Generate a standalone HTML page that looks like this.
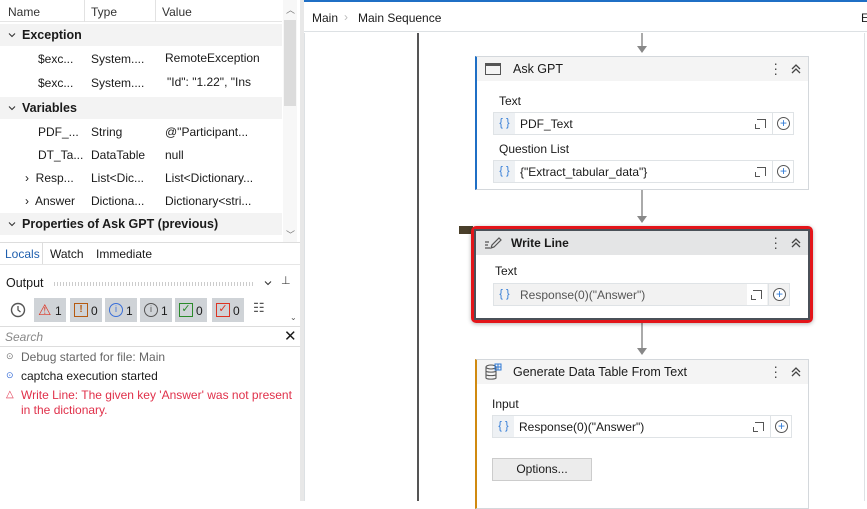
<!DOCTYPE html>
<html><head><meta charset="utf-8"><style>
*{box-sizing:border-box;margin:0;padding:0}
body{width:867px;height:501px;overflow:hidden;background:#fff;font-family:"Liberation Sans",sans-serif;font-size:12px;color:#1a1a1a;position:relative}
.a{position:absolute;white-space:nowrap}
.grp{position:absolute;left:0;width:282px;height:22px;background:#f3f3f3;font-weight:bold;font-size:12.5px;padding:4px 0 0 22px}
.grp svg{position:absolute;left:8px;top:8px}
.card{position:absolute;left:475px;width:334px;background:#fff;border:1px solid #d4d8dc}
.hd{height:24px;background:#f4f4f4;position:relative}
.hd .t{position:absolute;left:36px;top:5px;font-size:12.5px}
.fld{position:absolute;left:16px;width:301px;height:23px;border:1px solid #dfe3e6;background:#fff}
.fld .b{position:absolute;left:0;top:0;width:21px;height:21px;background:#eef1f4;color:#2f7ad6;font-size:11px;text-align:center;line-height:21px}
.fld .v{position:absolute;left:26px;top:4px;font-size:12px}
.fld .x{position:absolute;right:20px;top:0;width:1px;height:21px;background:#dfe3e6}
.fld .p{position:absolute;right:3px;top:4px;width:13px;height:13px;border:1.2px solid #555;border-radius:50%;color:#2f7ad6;font-size:12px;line-height:10px;text-align:center}
.fld .e{position:absolute;right:27px;top:6px;width:9px;height:9px;border-top:1.3px solid #555;border-right:1.3px solid #555}
.fld .e:after{content:"";position:absolute;left:-2px;top:4px;width:4px;height:4px;border-left:1.3px solid #555;border-bottom:1.3px solid #555}
.lbl{position:absolute;left:22px;font-size:12px}
.dots{position:absolute;right:30px;top:4px;font-size:14px;line-height:5px;color:#444}
.chev{position:absolute;right:6px;top:6px}
</style></head><body>
<svg width="0" height="0" style="position:absolute"><defs>
<symbol id="cv" viewBox="0 0 12 12"><path d="M2 6l4-4 4 4M2 10l4-4 4 4" fill="none" stroke="#444" stroke-width="1.3"/></symbol>
<symbol id="dn" viewBox="0 0 8 6"><path d="M1 1.5l3 3 3-3" fill="none" stroke="#333" stroke-width="1.1"/></symbol>
</defs></svg>
<div class="a" style="left:0;top:0;width:300px;height:501px;background:#fff"></div>
<div class="a" style="left:0;top:0;width:282px;height:22px;border-bottom:1px solid #e5e5e5"></div>
<div class="a" style="left:8px;top:5px;color:#333">Name</div>
<div class="a" style="left:84px;top:0;width:1px;height:22px;background:#e2e2e2"></div>
<div class="a" style="left:91px;top:5px;color:#333">Type</div>
<div class="a" style="left:155px;top:0;width:1px;height:22px;background:#e2e2e2"></div>
<div class="a" style="left:162px;top:5px;color:#333">Value</div>
<div class="grp" style="top:24px"><svg width="8" height="6"><use href="#dn"/></svg>Exception</div>
<div class="a" style="left:38px;top:52px">$exc...</div><div class="a" style="left:91px;top:52px">System....</div><div class="a" style="left:165px;top:51px">RemoteException</div>
<div class="a" style="left:38px;top:76px">$exc...</div><div class="a" style="left:91px;top:76px">System....</div><div class="a" style="left:167px;top:75px">"Id": "1.22",  "Ins</div>
<div class="grp" style="top:97px"><svg width="8" height="6"><use href="#dn"/></svg>Variables</div>
<div class="a" style="left:38px;top:125px">PDF_...</div><div class="a" style="left:91px;top:125px">String</div><div class="a" style="left:165px;top:125px">@"Participant...</div>
<div class="a" style="left:38px;top:148px">DT_Ta...</div><div class="a" style="left:91px;top:148px">DataTable</div><div class="a" style="left:165px;top:148px">null</div>
<div class="a" style="left:25px;top:171px">›&nbsp; Resp...</div><div class="a" style="left:91px;top:171px">List&lt;Dic...</div><div class="a" style="left:165px;top:171px">List&lt;Dictionary...</div>
<div class="a" style="left:25px;top:194px">›&nbsp; Answer</div><div class="a" style="left:91px;top:194px">Dictiona...</div><div class="a" style="left:165px;top:194px">Dictionary&lt;stri...</div>
<div class="grp" style="top:213px"><svg width="8" height="6"><use href="#dn"/></svg>Properties of Ask GPT (previous)</div>
<div class="a" style="left:283px;top:0;width:14px;height:242px;background:#f7f7f7"></div>
<div class="a" style="left:284px;top:20px;width:12px;height:86px;background:#dcdcdc"></div>
<div class="a" style="left:286px;top:3px;font-size:9px;color:#777">︿</div>
<div class="a" style="left:286px;top:228px;font-size:9px;color:#777">﹀</div>
<div class="a" style="left:0;top:242px;width:300px;height:1px;background:#ddd"></div>
<div class="a" style="left:0;top:243px;width:43px;height:21px;background:#fff;border-right:1px solid #ddd"></div>
<div class="a" style="left:5px;top:247px;color:#1f5fae">Locals</div>
<div class="a" style="left:50px;top:247px">Watch</div>
<div class="a" style="left:96px;top:247px">Immediate</div>
<div class="a" style="left:0;top:264px;width:300px;height:237px;background:#fff;border-top:1px solid #e6e6e6"></div>
<div class="a" style="left:6px;top:276px;font-size:12.5px">Output</div>
<div class="a" style="left:54px;top:282px;width:200px;height:4px;background:repeating-linear-gradient(90deg,#ccc 0 1px,transparent 1px 3px)"></div>
<svg class="a" style="left:264px;top:280px" width="8" height="6"><use href="#dn"/></svg>
<div class="a" style="left:281px;top:274px;font-size:11px;color:#444">⊥</div>
<svg class="a" style="left:10px;top:302px" width="16" height="16"><circle cx="8" cy="8" r="6.5" fill="none" stroke="#555" stroke-width="1.4"/><path d="M8 4v4l2.5 2" fill="none" stroke="#555" stroke-width="1.3"/></svg>
<div class="a" style="left:34px;top:298px;width:32px;height:24px;background:#cfd3d7"></div><div class="a" style="left:38px;top:301px;color:#d32;font-size:15px">⚠</div><div class="a" style="left:55px;top:304px">1</div>
<div class="a" style="left:70px;top:298px;width:32px;height:24px;background:#cfd3d7"></div><div class="a" style="left:74px;top:303px;width:14px;height:14px;border:1.5px solid #b55a10;color:#b55a10;font-size:10px;font-weight:bold;text-align:center;line-height:11px">!</div><div class="a" style="left:91px;top:304px">0</div>
<div class="a" style="left:105px;top:298px;width:32px;height:24px;background:#cfd3d7"></div><div class="a" style="left:109px;top:303px;width:14px;height:14px;border:1.5px solid #3a6fd8;border-radius:50%;color:#3a6fd8;font-size:9px;text-align:center;line-height:11px">i</div><div class="a" style="left:126px;top:304px">1</div>
<div class="a" style="left:140px;top:298px;width:32px;height:24px;background:#cfd3d7"></div><div class="a" style="left:144px;top:303px;width:14px;height:14px;border:1.5px solid #555;border-radius:50%;color:#555;font-size:9px;text-align:center;line-height:11px">i</div><div class="a" style="left:161px;top:304px">1</div>
<div class="a" style="left:175px;top:298px;width:32px;height:24px;background:#cfd3d7"></div><div class="a" style="left:179px;top:303px;width:14px;height:14px;border:1.5px solid #2a8a2a;color:#2a8a2a;font-size:11px;text-align:center;line-height:11px">✓</div><div class="a" style="left:196px;top:304px">0</div>
<div class="a" style="left:212px;top:298px;width:32px;height:24px;background:#cfd3d7"></div><div class="a" style="left:216px;top:303px;width:14px;height:14px;border:1.5px solid #d32;color:#d32;font-size:11px;text-align:center;line-height:11px">✓</div><div class="a" style="left:233px;top:304px">0</div>
<div class="a" style="left:253px;top:300px;font-size:13px;color:#555">☷</div>
<div class="a" style="left:290px;top:313px;font-size:8px;color:#555">⌄</div>
<div class="a" style="left:0;top:326px;width:300px;height:1px;background:#ddd"></div>
<div class="a" style="left:5px;top:330px;color:#888;font-style:italic">Search</div>
<div class="a" style="left:284px;top:327px;font-size:15px">✕</div>
<div class="a" style="left:0;top:346px;width:300px;height:1px;background:#ddd"></div>
<div class="a" style="left:6px;top:351px;font-size:9px;color:#777">⊙</div><div class="a" style="left:21px;top:350px;color:#666">Debug started for file: Main</div>
<div class="a" style="left:6px;top:370px;font-size:9px;color:#3a6fd8">⊙</div><div class="a" style="left:21px;top:369px">captcha execution started</div>
<div class="a" style="left:6px;top:389px;font-size:10px;color:#e0304a">△</div><div class="a" style="left:21px;top:388px;color:#e0304a">Write Line: The given key 'Answer' was not present</div>
<div class="a" style="left:21px;top:403px;color:#e0304a">in the dictionary.</div>
<div class="a" style="left:300px;top:0;width:4px;height:501px;background:#e8e8e8"></div>
<div class="a" style="left:304px;top:0;width:563px;height:2px;background:#1f6fc5"></div>
<div class="a" style="left:304px;top:2px;width:563px;height:30px;background:#fff;border-bottom:1px solid #dde1e4"></div>
<div class="a" style="left:312px;top:11px">Main</div><div class="a" style="left:344px;top:10px;color:#bbb">›</div><div class="a" style="left:358px;top:11px">Main Sequence</div><div class="a" style="left:861px;top:11px">E</div>
<div class="a" style="left:304px;top:33px;width:1px;height:468px;background:#dde1e4"></div>
<div class="a" style="left:864px;top:33px;width:1px;height:468px;background:#dde1e4"></div>
<div class="a" style="left:417px;top:33px;width:2px;height:468px;background:#555"></div>
<div class="a" style="left:641px;top:33px;width:2px;height:14px;background:#aaa"></div><div class="a" style="left:637px;top:46px;border:5px solid transparent;border-top:7px solid #888;border-bottom:0"></div>
<div class="a" style="left:641px;top:189px;width:2px;height:28px;background:#aaa"></div><div class="a" style="left:637px;top:216px;border:5px solid transparent;border-top:7px solid #888;border-bottom:0"></div>
<div class="a" style="left:641px;top:321px;width:2px;height:28px;background:#aaa"></div><div class="a" style="left:637px;top:348px;border:5px solid transparent;border-top:7px solid #888;border-bottom:0"></div>
<div class="card" style="top:56px;height:134px;border-left:2px solid #1f6fc5">
<div class="hd"><div class="a" style="left:8px;top:6px;width:16px;height:12px;border:1.3px solid #555;border-top-width:3px"></div><div class="t">Ask GPT</div><div class="dots">·<br>·<br>·</div><svg class="chev" width="12" height="12"><use href="#cv"/></svg></div>
<div class="lbl" style="top:37px">Text</div>
<div class="fld" style="top:55px"><div class="b">{ }</div><div class="v">PDF_Text</div><div class="e"></div><div class="x"></div><div class="p">+</div></div>
<div class="lbl" style="top:85px">Question List</div>
<div class="fld" style="top:103px"><div class="b">{ }</div><div class="v">{"Extract_tabular_data"}</div><div class="e"></div><div class="x"></div><div class="p">+</div></div>
</div>
<div class="a" style="left:459px;top:226px;width:14px;height:8px;background:#4a3f2a"></div>
<div class="a" style="left:471px;top:226px;width:342px;height:97px;border:3px solid #e3151a;border-radius:5px;box-shadow:0 1px 4px rgba(0,0,0,.3)"></div>
<div class="card" style="top:229px;left:474px;width:336px;height:91px;border:2px solid #4a5058">
<div class="hd" style="background:#e4e5e6;height:24px"><svg class="a" style="left:8px;top:5px" width="18" height="14"><path d="M1 6h4M1 9h3M1 12h5M7 12l1-3 7-7 2 2-7 7z" fill="none" stroke="#555" stroke-width="1.2"/></svg><div class="t" style="left:35px;font-weight:bold;font-size:12px">Write Line</div><div class="dots">·<br>·<br>·</div><svg class="chev" width="12" height="12"><use href="#cv"/></svg></div>
<div class="lbl" style="top:33px;left:19px">Text</div>
<div class="fld" style="top:52px;left:17px;width:297px;background:#f2f2f2"><div class="b" style="background:#f2f2f2">{ }</div><div class="v" style="color:#555;background:#f2f2f2">Response(0)("Answer")</div><div class="a" style="right:22px;top:0;width:20px;height:21px;background:#fff"></div><div class="e"></div><div class="x"></div><div class="p" style="background:#fff">+</div></div>
</div>
<div class="card" style="top:359px;height:150px;border-left:2px solid #d08a10">
<div class="hd"><svg class="a" style="left:7px;top:3px" width="18" height="18"><ellipse cx="7" cy="4" rx="5" ry="2" fill="none" stroke="#555" stroke-width="1.1"/><path d="M2 4v11c0 1.5 10 1.5 10 0V4M2 8c0 1.5 10 1.5 10 0M2 11.5c0 1.5 10 1.5 10 0" fill="none" stroke="#555" stroke-width="1.1"/><path d="M11 1h6v6h-6zM11 4h6M14 1v6" fill="none" stroke="#2f7ad6" stroke-width="1"/></svg><div class="t">Generate Data Table From Text</div><div class="dots">·<br>·<br>·</div><svg class="chev" width="12" height="12"><use href="#cv"/></svg></div>
<div class="lbl" style="top:37px;left:15px">Input</div>
<div class="fld" style="top:55px;left:15px;width:300px"><div class="b">{ }</div><div class="v">Response(0)("Answer")</div><div class="e"></div><div class="x"></div><div class="p">+</div></div>
<div class="a" style="left:15px;top:98px;width:100px;height:23px;background:#ececec;border:1px solid #ccc;text-align:center;line-height:21px">Options...</div>
</div>
</body></html>
